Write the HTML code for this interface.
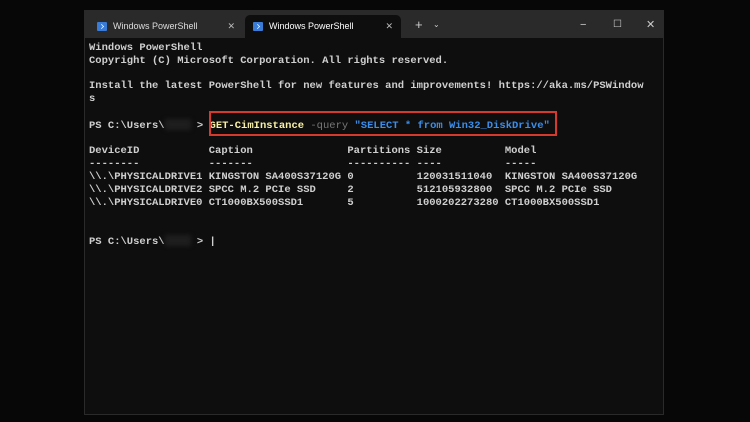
<!DOCTYPE html>
<html><head><meta charset="utf-8"><style>
body{margin:0;width:750px;height:422px;background:#070707;position:relative;overflow:hidden;font-family:"Liberation Sans",sans-serif}
.win{position:absolute;left:84px;top:10px;width:580px;height:405px;background:#0e0e0e;border:1px solid #2a2a2a;box-sizing:border-box}
.bar{position:absolute;left:0;top:0;width:100%;height:27px;background:#2a2a2a}
.tab{position:absolute;top:4px;height:23px;font-size:9px;color:#ddd;line-height:23px}
.tab1{left:4px;width:154px}
.tab2{left:160px;width:156px;background:#0e0e0e;border-radius:5px 5px 0 0;color:#fff}
.ico{position:absolute;left:8px;top:7px;width:10px;height:9px;background:#3b7bd8;border-radius:1px}
.ico:after{content:"";position:absolute;left:2px;top:2px;width:4px;height:4px;border-right:1.5px solid #fff;border-bottom:1.5px solid #fff;transform:rotate(-45deg) scale(.7)}
.tab span{position:absolute;left:24px}
.tab .x{left:auto;right:8px;color:#bbb}
.ctl{position:absolute;top:4px;color:#ccc;font-size:11px;line-height:20px}
pre{position:absolute;left:4px;top:31px;margin:0;font-family:"Liberation Mono",monospace;font-size:10.5px;line-height:12.8px;color:#cfcfcf;font-weight:bold}
.y{color:#f9f1a5}.g{color:#777;font-weight:normal}.b{color:#3b8eea}
.box{position:absolute;left:124px;top:100px;width:348px;height:25px;border:2px solid #d63a2f;box-sizing:border-box}
.blur{display:inline-block;background:#1e1e1e;width:26px;height:11px;vertical-align:-2px;filter:blur(2px)}
</style></head><body>
<div class="win">
<div class="bar">
<div class="tab tab1"><div class="ico"></div><span>Windows PowerShell</span><span class="x">✕</span></div>
<div class="tab tab2"><div class="ico"></div><span>Windows PowerShell</span><span class="x">✕</span></div>
<div class="ctl" style="left:330px;font-size:13px">+</div>
<div class="ctl" style="left:348px;font-size:8px">⌄</div>
<div class="ctl" style="left:495px">−</div>
<div class="ctl" style="left:528px;font-size:10px">☐</div>
<div class="ctl" style="left:561px">✕</div>
</div>
<pre>Windows PowerShell
Copyright (C) Microsoft Corporation. All rights reserved.

Install the latest PowerShell for new features and improvements! https://aka.ms/PSWindow
s

PS C:\Users\<span class="blur"></span> > <span class="y">GET-CimInstance</span> <span class="g">-query</span> <span class="b">"SELECT * from Win32_DiskDrive"</span>

DeviceID           Caption               Partitions Size          Model
--------           -------               ---------- ----          -----
\\.\PHYSICALDRIVE1 KINGSTON SA400S37120G 0          120031511040  KINGSTON SA400S37120G
\\.\PHYSICALDRIVE2 SPCC M.2 PCIe SSD     2          512105932800  SPCC M.2 PCIe SSD
\\.\PHYSICALDRIVE0 CT1000BX500SSD1       5          1000202273280 CT1000BX500SSD1


PS C:\Users\<span class="blur"></span> > |</pre>
<div class="box"></div>
</div>
</body></html>
